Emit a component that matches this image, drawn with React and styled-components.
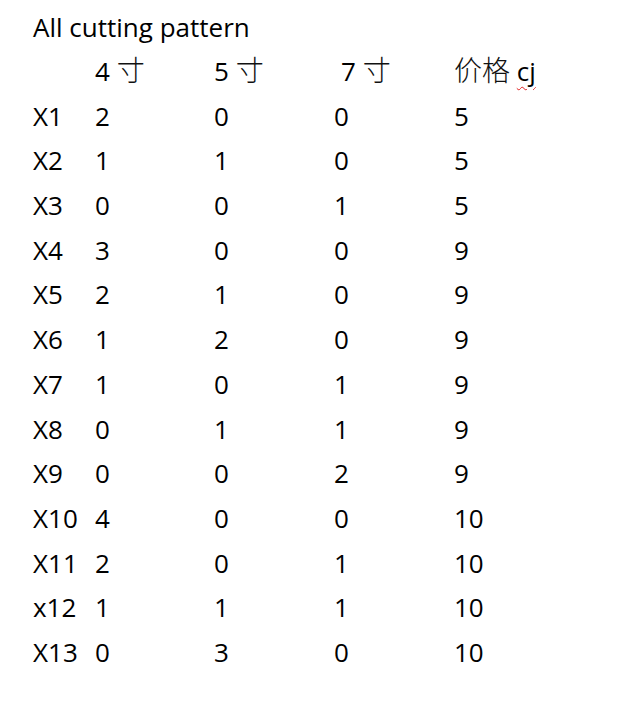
import styled, { createGlobalStyle } from 'styled-components';

const GlobalStyle = createGlobalStyle`
  html, body {
    margin: 0;
    padding: 0;
    background: #fff;
  }
`;

const Page = styled.div`
  width: 642px;
  height: 718px;
  background: #fff;
  padding: 9px 0 0 33px;
  box-sizing: border-box;
  font-family: "Open Sans", "Noto Sans CJK SC", sans-serif;
  font-size: 26px;
  color: #000;
`;

const Title = styled.div`
  line-height: 36px;
  height: 36px;
`;

const Table = styled.div`
  display: grid;
  grid-template-columns: 62px 119px 120px 120px 120px;
  grid-auto-rows: 44.7px;
  margin-top: 4px;
`;

const Cell = styled.div`
  line-height: 44.7px;
  height: 44.7px;
  overflow: visible;
  white-space: nowrap;
  padding-left: ${(p) => p.$shift || 0}px;
`;

const Cjk = styled.span`
  font-family: "Noto Sans CJK SC", sans-serif;
  font-weight: 300;
  font-size: 28px;
  line-height: 1;
  color: #111;
`;

const Spell = styled.span`
  text-decoration: underline wavy #e02020;
  text-decoration-thickness: 1px;
  text-underline-offset: 5px;
`;

const rows = [
  ['X1', 2, 0, 0, 5],
  ['X2', 1, 1, 0, 5],
  ['X3', 0, 0, 1, 5],
  ['X4', 3, 0, 0, 9],
  ['X5', 2, 1, 0, 9],
  ['X6', 1, 2, 0, 9],
  ['X7', 1, 0, 1, 9],
  ['X8', 0, 1, 1, 9],
  ['X9', 0, 0, 2, 9],
  ['X10', 4, 0, 0, 10],
  ['X11', 2, 0, 1, 10],
  ['x12', 1, 1, 1, 10],
  ['X13', 0, 3, 0, 10],
];

export default function App() {
  return (
    <Page>
      <GlobalStyle />
      <Title>All cutting pattern</Title>
      <Table>
        <Cell />
        <Cell>4 <Cjk>寸</Cjk></Cell>
        <Cell>5 <Cjk>寸</Cjk></Cell>
        <Cell $shift={7}>7 <Cjk>寸</Cjk></Cell>
        <Cell><Cjk>价格</Cjk> <Spell>cj</Spell></Cell>
        {rows.map((r) => r.map((v, i) => <Cell key={r[0] + i}>{v}</Cell>))}
      </Table>
    </Page>
  );
}
